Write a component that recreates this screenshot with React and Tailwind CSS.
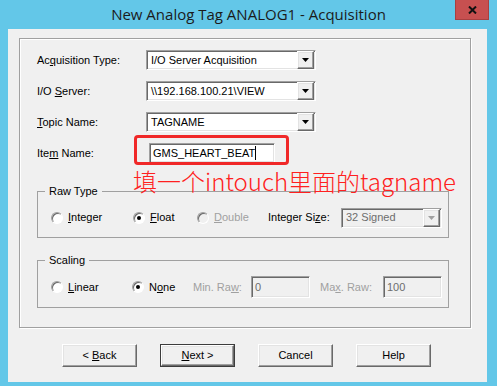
import React from 'react';

const sunken =
  'border border-t-[#a0a0a0] border-l-[#a0a0a0] border-b-white border-r-white shadow-[inset_1px_1px_0_#696969,inset_-1px_-1px_0_#e3e3e3]';
const raised =
  'border border-t-white border-l-white border-b-[#696969] border-r-[#696969] shadow-[inset_-1px_-1px_0_#a0a0a0,inset_1px_1px_0_#e3e3e3]';

const U = ({ children }) => <span className="underline underline-offset-[1px]">{children}</span>;

const Arrow = ({ color = '#000' }) => (
  <svg width="7" height="4" viewBox="0 0 7 4">
    <path d="M0 0h7L3.5 4z" fill={color} />
  </svg>
);

const Combo = ({ value, width = 'w-[170px]', disabled }) => (
  <div className={`${width} h-[20px] flex items-center ${sunken} ${disabled ? 'bg-[#f0f0f0] text-[#6d6d6d]' : 'bg-white'}`}>
    <span className="flex-1 pl-[4px] whitespace-nowrap overflow-hidden">{value}</span>
    <span className={`w-[17px] h-full bg-[#f0f0f0] mr-[1px] flex items-center justify-center ${raised}`}>
      <Arrow color={disabled ? '#a0a0a0' : '#000'} />
    </span>
  </div>
);

const Radio = ({ checked, disabled }) => (
  <span
    className={`w-[12px] h-[12px] rounded-full shrink-0 flex items-center justify-center border border-t-[#a0a0a0] border-l-[#a0a0a0] border-b-white border-r-white shadow-[inset_1px_1px_0_#696969] ${disabled ? 'bg-[#f0f0f0]' : 'bg-white'}`}
  >
    {checked && <span className="w-[4px] h-[4px] rounded-full bg-black" />}
  </span>
);

const RadioItem = ({ width, checked, disabled, children }) => (
  <div className={`${width} flex items-center gap-[5px] ${disabled ? 'text-[#a0a0a0]' : ''}`}>
    <Radio checked={checked} disabled={disabled} />
    <span>{children}</span>
  </div>
);

const Field = ({ value }) => (
  <div className={`w-[59px] h-[22px] flex items-center pl-[3px] bg-[#f0f0f0] text-[#6d6d6d] ${sunken}`}>{value}</div>
);

const Button = ({ children, isDefault }) => (
  <div className={`w-[75px] h-[23px] ${isDefault ? 'border border-[#3c3c3c]' : ''}`}>
    <div className={`w-full h-full bg-[#f0f0f0] flex items-center justify-center whitespace-pre ${raised}`}>{children}</div>
  </div>
);

const Group = ({ title, children, height, className = '' }) => (
  <fieldset className={`w-[412px] border border-[#a0a0a0] ${className}`}>
    <legend className="ml-[7px] px-[4px] leading-[13px]">{title}</legend>
    <div className={`${height} flex items-center pl-[13px]`}>{children}</div>
  </fieldset>
);

export default function App() {
  return (
    <div className="w-[497px] h-[386px] bg-[#63c7e8] flex flex-col relative font-['Liberation_Sans',Arial,sans-serif] text-[11px] text-black">
      {/* title bar */}
      <div className="h-[29px] flex items-center justify-center relative">
        <span className="font-['Open_Sans','Noto_Sans',sans-serif] text-[15px] text-[#1b1b1b] -mt-[1px]">
          New Analog Tag ANALOG1 - Acquisition
        </span>
        <div className="absolute top-0 right-[8px] w-[34px] h-[20px] bg-[#c75050] border border-t-0 border-[#a84040] flex items-center justify-center">
          <svg width="9" height="8" viewBox="0 0 9 8">
            <path d="M1 0.5l7 7M8 0.5l-7 7" stroke="#111" strokeWidth="2" />
          </svg>
        </div>
      </div>

      {/* client area */}
      <div className="w-[479px] ml-[8px] h-[353px] bg-[#f0f0f0] pt-[9px]">
        <div className="ml-[11px] w-[452px] h-[290px] border border-[#a0a0a0] shadow-[1px_1px_0_#fff,inset_1px_1px_0_#fff] pt-[11px] px-[17px]">
          <div className="grid grid-cols-[109px_auto] gap-y-[11px] items-center">
            <span>
              Ac<U>q</U>uisition Type:
            </span>
            <Combo value="I/O Server Acquisition" />
            <span>
              I/O <U>S</U>erver:
            </span>
            <Combo value="\\192.168.100.21\VIEW" />
            <span>
              <U>T</U>opic Name:
            </span>
            <Combo value="TAGNAME" />
            <span>
              Ite<U>m</U> Name:
            </span>
            <div className={`ml-[3px] w-[126px] h-[20px] bg-white flex items-center pl-[3px] ${sunken}`}>
              GMS_HEART_BEAT
              <span className="w-[1px] h-[14px] bg-black" />
            </div>
          </div>

          <Group title="Raw Type" height="h-[39px]" className="mt-[22px]">
            <RadioItem width="w-[82px]">
              <U>I</U>nteger
            </RadioItem>
            <RadioItem width="w-[64px]" checked>
              <U>F</U>loat
            </RadioItem>
            <RadioItem width="w-[71px]" disabled>
              <U>D</U>ouble
            </RadioItem>
            <span className="w-[73px]">
              Integer Si<U>z</U>e:
            </span>
            <Combo value="32 Signed" width="w-[101px]" disabled />
          </Group>

          <Group title="Scaling" height="h-[40px]" className="mt-[16px]">
            <RadioItem width="w-[81px]">
              <U>L</U>inear
            </RadioItem>
            <RadioItem width="w-[61px]" checked>
              N<U>o</U>ne
            </RadioItem>
            <span className="w-[58px] text-[#a0a0a0]">
              Min. Ra<U>w</U>:
            </span>
            <Field value="0" />
            <span className="w-[63px] ml-[10px] text-[#a0a0a0]">
              Ma<U>x</U>. Raw:
            </span>
            <Field value="100" />
          </Group>
        </div>

        <div className="flex gap-[23px] pl-[54px] mt-[16px]">
          <Button>
            {'< '}
            <U>B</U>ack
          </Button>
          <Button isDefault>
            <U>N</U>
            {'ext >'}
          </Button>
          <Button>Cancel</Button>
          <Button>Help</Button>
        </div>
      </div>

      {/* red annotation */}
      <div className="absolute left-[134px] top-[135px] w-[155px] h-[30px] border-[3px] border-[#f02828] rounded-[4px]" />
      <div className="absolute left-[133px] top-[169px] text-[24px] leading-none font-light text-[#ff2020] font-['Noto_Sans_CJK_SC',sans-serif] whitespace-nowrap">
        填一个intouch里面的tagname
      </div>
    </div>
  );
}
